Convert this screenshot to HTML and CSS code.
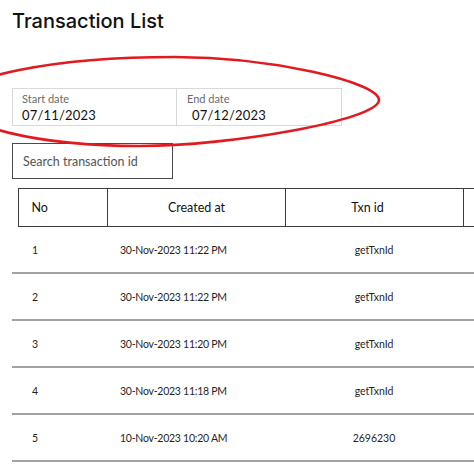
FILE: index.html
```html
<!DOCTYPE html>
<html lang="en">
<head>
<meta charset="utf-8">
<title>Transaction List</title>
<link rel="stylesheet" href="styles.css">
</head>
<body>
<div class="page">
  <h1 class="title">Transaction List</h1>

  <div class="date-range">
    <div class="date-field">
      <span class="date-label">Start date</span>
      <span class="date-value">07/11/2023</span>
    </div>
    <div class="date-field date-field-end">
      <span class="date-label">End date</span>
      <span class="date-value date-value-end">07/12/2023</span>
    </div>
  </div>

  <input class="search" type="text" placeholder="Search transaction id">

  <div class="table">
    <div class="thead">
      <div class="th th-no">No</div>
      <div class="th th-created">Created at</div>
      <div class="th th-txn">Txn id</div>
      <div class="th th-extra"></div>
    </div>
    <div class="tr">
      <div class="td td-no">1</div>
      <div class="td td-created">30-Nov-2023 11:22 PM</div>
      <div class="td td-txn">getTxnId</div>
    </div>
    <div class="tr">
      <div class="td td-no">2</div>
      <div class="td td-created">30-Nov-2023 11:22 PM</div>
      <div class="td td-txn">getTxnId</div>
    </div>
    <div class="tr">
      <div class="td td-no">3</div>
      <div class="td td-created">30-Nov-2023 11:20 PM</div>
      <div class="td td-txn">getTxnId</div>
    </div>
    <div class="tr">
      <div class="td td-no">4</div>
      <div class="td td-created">30-Nov-2023 11:18 PM</div>
      <div class="td td-txn">getTxnId</div>
    </div>
    <div class="tr">
      <div class="td td-no">5</div>
      <div class="td td-created">10-Nov-2023 10:20 AM</div>
      <div class="td td-txn">2696230</div>
    </div>
  </div>

  <svg class="annotation" width="474" height="466" viewBox="0 0 474 466" aria-hidden="true">
    <path d="M379,100 C379,82 270,57 175,57 C53,57 -45,77 -45,101 C-45,126 38,146 140,146 C230,146 379,120 379,100 Z"
          fill="none" stroke="#e21a1f" stroke-width="2.6"/>
  </svg>
</div>
</body>
</html>
```

FILE: styles.css
```css
html, body {
  margin: 0;
  padding: 0;
  background: #ffffff;
}

.page {
  position: relative;
  width: 474px;
  height: 466px;
  overflow: hidden;
  font-family: Lato, "Noto Sans", sans-serif;
  color: #1a1a1a;
}

.title {
  margin: 9px 0 0 12px;
  font-family: Inter, "Noto Sans", sans-serif;
  font-size: 20px;
  line-height: 24px;
  font-weight: 500;
  color: #111111;
}

.date-range {
  display: flex;
  width: 330px;
  height: 38px;
  margin: 55px 0 0 12px;
  box-sizing: border-box;
  border: 1px solid #d9d9d9;
}

.date-field {
  flex: 1;
  display: flex;
  flex-direction: column;
  padding: 3px 0 0 9px;
}

.date-field-end {
  border-left: 1px solid #d9d9d9;
  padding-left: 10px;
}

.date-label {
  font-size: 11px;
  line-height: 13px;
  color: #6b6b6b;
}

.date-value {
  margin-top: 2px;
  font-size: 13px;
  line-height: 16px;
  color: #111111;
  letter-spacing: 0.2px;
}

.date-value-end {
  padding-left: 5px;
}

.search {
  display: block;
  width: 161px;
  height: 36px;
  margin: 17px 0 0 12px;
  box-sizing: border-box;
  border: 1px solid #4a4a4a;
  border-radius: 0;
  padding: 0 0 0 10px;
  font-family: Lato, "Noto Sans", sans-serif;
  font-size: 12.5px;
  color: #111111;
  background: #ffffff;
  outline: none;
}

.search::placeholder {
  color: #555555;
  opacity: 1;
}

.table {
  margin: 9px 0 0 12px;
  width: 700px;
}

.thead {
  display: flex;
  margin-left: 6px;
  height: 39px;
  box-sizing: border-box;
  border-top: 1.5px solid #3c3c3c;
  border-bottom: 1.5px solid #3c3c3c;
}

.th {
  display: flex;
  align-items: center;
  box-sizing: border-box;
  border-left: 1.5px solid #3c3c3c;
  font-size: 12.5px;
  color: #111111;
  flex: none;
}

.th-no {
  width: 89px;
  padding-left: 12.5px;
}

.th-created {
  width: 178px;
  justify-content: center;
}

.th-txn {
  width: 178px;
  justify-content: center;
  padding-right: 14px;
}

.th-extra {
  width: 178px;
}

.tr {
  display: flex;
  height: 47px;
  box-sizing: border-box;
  border-bottom: 2px solid #a2a2a2;
}

.td {
  display: flex;
  align-items: center;
  flex: none;
  font-size: 10.5px;
  color: #1f1f1f;
}

.td-no {
  width: 95px;
  padding-left: 20px;
  box-sizing: border-box;
}

.td-created {
  width: 178px;
  padding-left: 13px;
  box-sizing: border-box;
  letter-spacing: -0.25px;
}

.td-txn {
  width: 178px;
  justify-content: center;
}

.annotation {
  position: absolute;
  left: 0;
  top: 0;
  pointer-events: none;
}
```
